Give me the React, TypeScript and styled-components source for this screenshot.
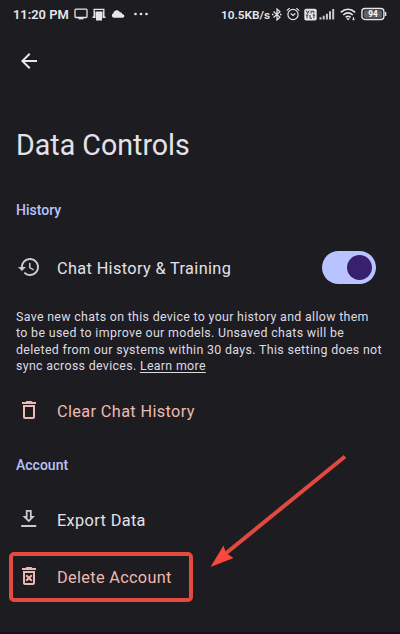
import React from "react";
import styled, { createGlobalStyle } from "styled-components";

const Global = createGlobalStyle`
  * { box-sizing: border-box; }
  body { margin: 0; background: #1d1c21; }
`;

const Screen = styled.main`
  position: relative;
  display: flex;
  flex-direction: column;
  width: 400px;
  height: 634px;
  overflow: hidden;
  background: #1d1c21;
  border-bottom: 2px solid #160e18;
  color: #e4e2e8;
  font-family: Roboto, "Liberation Sans", sans-serif;
`;

const StatusBar = styled.header`
  display: flex;
  align-items: center;
  justify-content: space-between;
  height: 28px;
  padding: 0 13px 0 13px;
  color: #e6e5e9;
`;

const StatusGroup = styled.div`
  display: flex;
  align-items: center;
`;

const StatusText = styled.span<{ $size: number; $spacing: number }>`
  margin-top: 1px;
  font-size: ${(p) => p.$size}px;
  letter-spacing: ${(p) => p.$spacing}px;
  font-weight: 600;
  line-height: 16px;
  white-space: nowrap;
`;

const Glyph = styled.svg<{ $gap?: number }>`
  display: block;
  flex: none;
  margin-left: ${(p) => p.$gap ?? 0}px;
`;

const AppBar = styled.nav`
  display: flex;
  align-items: center;
  height: 65px;
  padding-left: 17px;
`;

const BackButton = styled.button`
  display: flex;
  padding: 0;
  border: 0;
  background: none;
  color: #e8e7ec;
`;

const Title = styled.h1`
  margin: 33px 0 0 16px;
  height: 38px;
  font-size: 28.6px;
  line-height: 38px;
  font-weight: 400;
  letter-spacing: 0;
  white-space: nowrap;
`;

const SectionTitle = styled.h2<{ $top: number }>`
  margin: ${(p) => p.$top}px 0 0 16px;
  height: 20px;
  font-size: 14px;
  line-height: 20px;
  font-weight: 500;
  letter-spacing: 0;
  color: #b9c3fa;
`;

const Row = styled.div<{ $danger?: boolean; $height: number; $top?: number }>`
  display: flex;
  align-items: center;
  height: ${(p) => p.$height}px;
  margin-top: ${(p) => p.$top ?? 0}px;
  padding: 0 24px 0 17px;
  color: ${(p) => (p.$danger ? "#efb9b3" : "#e4e2e8")};
`;

const RowIcon = styled.svg<{ $tint?: string; $lift?: number }>`
  display: block;
  flex: none;
  width: 24px;
  height: 24px;
  margin-bottom: ${(p) => p.$lift ?? 0}px;
  fill: ${(p) => p.$tint ?? "currentColor"};
`;

const Label = styled.span<{ $spacing: number; $drop?: number }>`
  flex: 1;
  margin: ${(p) => p.$drop ?? 2}px 0 0 16px;
  font-size: 16.3px;
  line-height: 24px;
  letter-spacing: ${(p) => p.$spacing}px;
  white-space: nowrap;
`;

const Switch = styled.button`
  display: flex;
  align-items: center;
  justify-content: flex-end;
  width: 54px;
  height: 33px;
  padding: 0 4px;
  border: 0;
  border-radius: 17px;
  background: #b9c3ff;
`;

const Thumb = styled.span`
  width: 25px;
  height: 25px;
  border-radius: 50%;
  background: #38206f;
`;

const Description = styled.p`
  margin: 14px 0 0 16px;
  font-size: 12.4px;
  line-height: 16.4px;
  color: #dddbe1;
  white-space: nowrap;
`;

const Line = styled.span<{ $spacing: number }>`
  display: block;
  letter-spacing: ${(p) => p.$spacing}px;
`;

const Link = styled.a`
  text-decoration: underline;
  text-underline-offset: 2px;
  text-decoration-thickness: 1px;
`;

const Highlight = styled.div`
  position: absolute;
  left: 9px;
  top: 552px;
  width: 184px;
  height: 50px;
  border: 4px solid #e5493f;
  border-radius: 5px;
`;

const Pointer = styled.svg`
  position: absolute;
  left: 200px;
  top: 446px;
`;

export default function App() {
  return (
    <>
      <Global />
      <Screen>
        <StatusBar>
          <StatusGroup>
            <StatusText $size={12.9} $spacing={0}>11:20 PM</StatusText>
            <Glyph $gap={5} width="14" height="12" viewBox="0 0 14 12" fill="none" stroke="currentColor">
              <rect x="1" y="1.200" width="12" height="8.300" rx="1" strokeWidth="1.300" />
              <path d="M4.500 10.600h5" strokeWidth="1.500" />
            </Glyph>
            <Glyph $gap={4} width="14" height="13" viewBox="0 0 14 13" fill="currentColor">
              <path d="M1.500 .8h11v7.700h1V10h-3V3.500h.7V2H2.800v1.500h.7V10h-3V8.500h1zM4 3.500h6v9H4z" />
            </Glyph>
            <Glyph $gap={5} width="14" height="10" viewBox="0 0 13 9" fill="currentColor">
              <path d="M2.600 8A2.200 2.200 0 0 1 2.200 3.800C2.600.9 6.600-.2 8.200 2.800c1.700-.2 2 .8 2.100 1.700C13 4.600 13 8 10.700 8z" />
            </Glyph>
            <Glyph $gap={8} width="16" height="4" viewBox="0 0 16 4" fill="currentColor">
              <circle cx="2.500" cy="2" r="1.350" />
              <circle cx="8" cy="2" r="1.350" />
              <circle cx="13.500" cy="2" r="1.350" />
            </Glyph>
          </StatusGroup>
          <StatusGroup>
            <StatusText $size={11.8} $spacing={0}>10.5KB/s</StatusText>
            <Glyph $gap={1} width="12" height="13" viewBox="0 0 12 13" fill="none" stroke="currentColor" strokeWidth="1.200">
              <path d="M2.500 3.500l6.500 5.700L6 12V1l3 2.800-6.500 5.700" />
              <path d="M1 6.500h1.500M9 6.500h1.500" strokeWidth="1.500" />
            </Glyph>
            <Glyph $gap={3} width="14" height="14" viewBox="0 0 14 14" fill="none" stroke="currentColor" strokeWidth="1.200">
              <circle cx="7" cy="7.500" r="5.100" />
              <path d="M.8 3.600L3.700 1.100M10.300 1.100l2.900 2.500M4.800 6.500L7 8.500l2.300-2" />
            </Glyph>
            <Glyph $gap={4} width="13" height="13" viewBox="0 0 13 13">
              <rect x=".3" y=".8" width="12.400" height="11.800" rx="1.800" fill="currentColor" />
              <path d="M2.300 2.500L3.700 5.500 5.100 2.500M7 5.500V3.300h2.800v2.200M3 7v3.300M1.800 7h2.600M6 7v3.300h2M8.600 7h2.600M9.900 7v3.300" fill="none" stroke="#29282d" strokeWidth=".9" />
            </Glyph>
            <Glyph $gap={2} width="16" height="12" viewBox="0 0 16 12" fill="currentColor">
              <path d="M.5 9.200h2V11.500h-2zM3.700 7.700h2v3.800h-2zM6.900 5.700h2v5.800h-2zM10 3.200h2v8.300h-2zM13.200 1h2v10.500h-2z" opacity=".85" />
            </Glyph>
            <Glyph $gap={5} width="17" height="13" viewBox="0 0 17 13" fill="none" stroke="currentColor" strokeWidth="1.600">
              <path d="M.8 4.300c4.400-3.900 10-3.900 14.400 0M3.200 7c2.900-2.600 6.700-2.600 9.600 0M5.700 9.300c1.600-1.400 3.300-1.400 4.900 0" />
              <path d="M6.300 10.300h3.600L8.100 12.500z" fill="currentColor" stroke="none" />
              <path d="M13.500 9v3M12.200 10.800l1.300 1.300 1.300-1.300" strokeWidth=".9" />
            </Glyph>
            <Glyph $gap={4} width="26" height="14" viewBox="0 0 26 14">
              <rect x=".9" y="1.500" width="22" height="11" rx="3" fill="none" stroke="currentColor" strokeWidth="1.400" />
              <rect x="2.700" y="3.300" width="18.400" height="7.400" rx="1.500" fill="#626167" />
              <path d="M24.600 5v4" stroke="currentColor" strokeWidth="1.400" />
              <text x="11.900" y="9.800" textAnchor="middle" fontFamily="Roboto" fontWeight="700" fontSize="8.200" fill="#fff">94</text>
            </Glyph>
          </StatusGroup>
        </StatusBar>
        <AppBar>
          <BackButton aria-label="Back">
            <RowIcon viewBox="0 0 24 24">
              <path d="M20 11H7.830l5.590-5.590L12 4l-8 8 8 8 1.410-1.410L7.830 13H20z" />
            </RowIcon>
          </BackButton>
        </AppBar>
        <Title>Data Controls</Title>
        <SectionTitle $top={36}>History</SectionTitle>
        <Row $height={56} $top={19}>
          <RowIcon viewBox="0 0 24 24" $tint="#cbc9d0">
            <path d="M13 3c-4.970 0-9 4.030-9 9H1l3.890 3.890.07.14L9 12H6c0-3.870 3.130-7 7-7s7 3.130 7 7-3.130 7-7 7c-1.930 0-3.680-.79-4.940-2.060l-1.420 1.420C8.270 19.990 10.510 21 13 21c4.970 0 9-4.030 9-9s-4.030-9-9-9m-1 5v5l4.280 2.540.72-1.210-3.500-2.080V8z" />
          </RowIcon>
          <Label $spacing={0.37} $drop={4}>Chat History &amp; Training</Label>
          <Switch role="switch" aria-checked="true" aria-label="Chat History & Training">
            <Thumb />
          </Switch>
        </Row>
        <Description>
          <Line $spacing={0.32}>Save new chats on this device to your history and allow them</Line>
          <Line $spacing={0.34}>to be used to improve our models. Unsaved chats will be</Line>
          <Line $spacing={0.34}>deleted from our systems within 30 days. This setting does not</Line>
          <Line $spacing={0.32}>sync across devices. <Link>Learn more</Link></Line>
        </Description>
        <Row $danger $height={56} $top={8}>
          <RowIcon viewBox="0 0 24 24" $lift={1}>
            <path d="M6 19c0 1.100.9 2 2 2h8c1.100 0 2-.9 2-2V7H6zM8 9h8v10H8zm7.500-5-1-1h-5l-1 1H5v2h14V4z" />
          </RowIcon>
          <Label $spacing={0.37}>Clear Chat History</Label>
        </Row>
        <SectionTitle $top={16}>Account</SectionTitle>
        <Row $height={56} $top={17}>
          <RowIcon viewBox="0 0 24 24" $tint="#cbc9d0" $lift={1}>
            <path d="M8.800 3h5.900v6h3.300l-6.250 6.300L5.500 9h3.300zM10.600 4.800v6h-.8l1.950 1.900 1.950-1.900h-.8v-6zM4.200 18h15v2h-15z" fillRule="evenodd" />
          </RowIcon>
          <Label $spacing={0.37}>Export Data</Label>
        </Row>
        <Row $danger $height={56} $top={1}>
          <RowIcon viewBox="0 0 24 24" $lift={1}>
            <path d="M14.120 10.470 12 12.590l-2.130-2.120-1.410 1.410L10.590 14l-2.120 2.120 1.410 1.410L12 15.410l2.120 2.120 1.410-1.410L13.410 14l2.120-2.120zM15.500 4l-1-1h-5l-1 1H5v2h14V4zM6 19c0 1.100.9 2 2 2h8c1.100 0 2-.9 2-2V7H6zM8 9h8v10H8z" />
          </RowIcon>
          <Label $spacing={0.33}>Delete Account</Label>
        </Row>
        <Highlight />
        <Pointer width="160" height="130" viewBox="0 0 160 130">
          <path d="M145 10.500L25 108" stroke="#e0493f" strokeWidth="4" />
          <path d="M10.500 121L23.500 99.500l2.500 7.500 7.500 5z" fill="#f9483e" />
        </Pointer>
      </Screen>
    </>
  );
}
